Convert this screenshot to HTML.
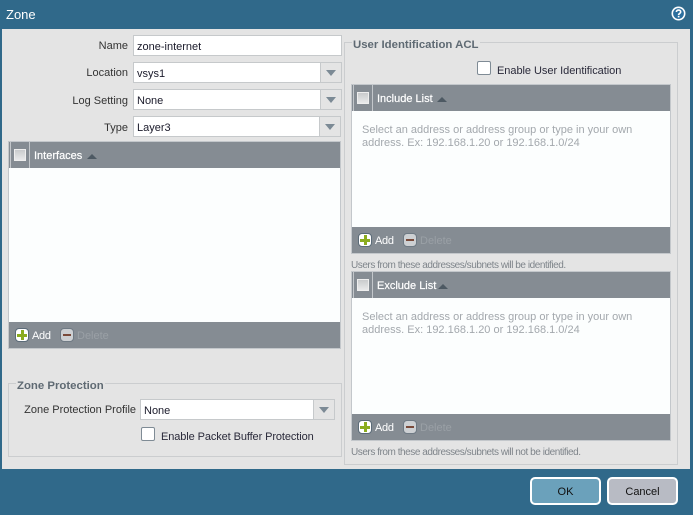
<!DOCTYPE html>
<html><head><meta charset="utf-8"><style>
html,body{margin:0;padding:0;width:693px;height:515px;overflow:hidden;background:#30698a}
body{position:relative;font-family:"Liberation Sans",sans-serif;font-size:11px;color:#222}
div,span{position:absolute;box-sizing:border-box;white-space:nowrap}
.lbl{text-align:right;line-height:14px;height:14px;color:#333}
.inp{background:#fff;border:1px solid #c6c9cb;height:21px;line-height:22px;padding-left:3px;color:#1a1a2a}
.arr{position:absolute;top:0;bottom:0;right:0;width:21px;background:#e4e4e4;border-left:1px solid #c6c9cb}
.arr:after{content:"";position:absolute;left:5px;top:7px;border-left:5px solid transparent;border-right:5px solid transparent;border-top:6px solid #7c8a95}
.fs{border:1px solid #cbcdcf}
.leg{font-weight:bold;color:#5f6a73;background:#e4e4e4;padding:0 1px;line-height:14px;height:14px;font-size:11.4px}
.cb{width:14px;height:14px;background:#fff;border:1px solid #7f8b95;border-radius:2px}
.tbl{background:#fcfefe;border:1px solid #c3c7cb}
.hd{left:0;right:0;top:0;height:26px;background:#858c93}
.s1{top:0;bottom:0;width:1px;background:#c3c7cb;left:1px}
.s2{top:0;bottom:0;width:1px;background:#c3c7cb;left:20px}
.hcb{left:5px;top:7px;width:12px;height:12px;background:linear-gradient(#c9cbcd,#e9eaeb);border:1px solid #eee}
.ht{left:25px;top:7px;color:#fff;line-height:14px;font-weight:normal;-webkit-text-stroke:.2px #fff}
.tri{top:12px;border-left:5px solid transparent;border-right:5px solid transparent;border-bottom:5px solid #4d5963;width:0;height:0}
.ft{left:0;right:0;bottom:0;height:26px;background:#858c93}
.add{left:6px;top:6px;width:14px;height:14px;background:#fff;border-radius:4px;border:1px solid #5b6b78}
.add:before{content:"";position:absolute;left:4.5px;top:1px;width:3px;height:10px;background:#8bac1f}
.add:after{content:"";position:absolute;left:1px;top:4.5px;width:10px;height:3px;background:#8bac1f}
.del{left:51px;top:6px;width:14px;height:14px;background:#cdd0d3;border-radius:4px;border:1px solid #6f7a84}
.del:after{content:"";position:absolute;left:2px;top:5px;width:8px;height:2px;background:#7a4a3a}
.at{left:23px;top:7px;color:#fff;line-height:14px;letter-spacing:-.3px}
.dt{left:68px;top:7px;color:#9aa0a6;line-height:14px}
.ph{left:10px;top:39px;color:#a3a8ad;line-height:13px}
.sm{color:#7f858b;font-size:10px;line-height:12px;letter-spacing:-.45px}
.btn{top:477px;width:71px;height:28px;border:2px solid #fff;border-radius:5px;text-align:center;line-height:26px;color:#111}
</style></head><body>
<div style="left:6px;top:6px;color:#fff;font-size:13px;line-height:18px">Zone</div>
<svg style="position:absolute;left:671px;top:6px" width="15" height="15" viewBox="0 0 15 15"><circle cx="7.5" cy="7.5" r="7" fill="#fff"/><circle cx="7.5" cy="7.5" r="5.4" fill="#2b6f9e"/><path d="M5.4 6c0-2.6 4.3-2.6 4.3 0 0 1.5-2.1 1.4-2.1 3" fill="none" stroke="#fff" stroke-width="1.6"/><rect x="6.8" y="9.8" width="1.7" height="1.6" fill="#fff"/></svg>
<div style="left:2px;top:29px;width:688px;height:440px;background:#e4e4e4"></div>

<div class="lbl" style="left:20px;width:108px;top:39px">Name</div>
<div class="inp" style="left:133px;top:35px;width:209px">zone-internet</div>
<div class="lbl" style="left:20px;width:108px;top:66px">Location</div>
<div class="inp" style="left:133px;top:62px;width:209px">vsys1<span class="arr"></span></div>
<div class="lbl" style="left:20px;width:108px;top:94px">Log Setting</div>
<div class="inp" style="left:133px;top:89px;width:209px">None<span class="arr"></span></div>
<div class="lbl" style="left:20px;width:108px;top:121px">Type</div>
<div class="inp" style="left:133px;top:116px;width:208px">Layer3<span class="arr"></span></div>

<div class="tbl" style="left:8px;top:141px;width:333px;height:208px">
 <div class="hd"><div class="s1"></div><div class="s2"></div><div class="hcb"></div><div class="ht">Interfaces</div><div class="tri" style="left:78px"></div></div>
 <div class="ft"><div class="add"></div><div class="at">Add</div><div class="del"></div><div class="dt">Delete</div></div>
</div>

<div class="fs" style="left:8px;top:383px;width:334px;height:74px"></div>
<div class="leg" style="left:16px;top:379px">Zone Protection</div>
<div class="lbl" style="left:10px;width:126px;top:403px">Zone Protection Profile</div>
<div class="inp" style="left:140px;top:399px;width:195px">None<span class="arr"></span></div>
<div class="cb" style="left:141px;top:427px"></div>
<div style="left:161px;top:430px;line-height:14px;color:#2a2a3a;letter-spacing:-.1px">Enable Packet Buffer Protection</div>

<div class="fs" style="left:344px;top:42px;width:334px;height:423px"></div>
<div class="leg" style="left:352px;top:38px">User Identification ACL</div>
<div class="cb" style="left:477px;top:61px"></div>
<div style="left:497px;top:64px;line-height:14px;color:#2a2a3a;letter-spacing:-.04px">Enable User Identification</div>

<div class="tbl" style="left:351px;top:84px;width:320px;height:170px">
 <div class="hd"><div class="s1"></div><div class="s2"></div><div class="hcb"></div><div class="ht">Include List</div><div class="tri" style="left:85px"></div></div>
 <div class="ph">Select an address or address group or type in your own<br>address. Ex: 192.168.1.20 or 192.168.1.0/24</div>
 <div class="ft"><div class="add"></div><div class="at">Add</div><div class="del"></div><div class="dt">Delete</div></div>
</div>
<div class="sm" style="left:351px;top:260px">Users from these addresses/subnets will be identified.</div>

<div class="tbl" style="left:351px;top:271px;width:320px;height:170px">
 <div class="hd"><div class="s1"></div><div class="s2"></div><div class="hcb"></div><div class="ht">Exclude List</div><div class="tri" style="left:86px"></div></div>
 <div class="ph">Select an address or address group or type in your own<br>address. Ex: 192.168.1.20 or 192.168.1.0/24</div>
 <div class="ft"><div class="add"></div><div class="at">Add</div><div class="del"></div><div class="dt">Delete</div></div>
</div>
<div class="sm" style="left:351px;top:447px">Users from these addresses/subnets will not be identified.</div>

<div class="btn" style="left:530px;background:#6ba1bb">OK</div>
<div class="btn" style="left:607px;background:#b8bbc4">Cancel</div>
</body></html>
